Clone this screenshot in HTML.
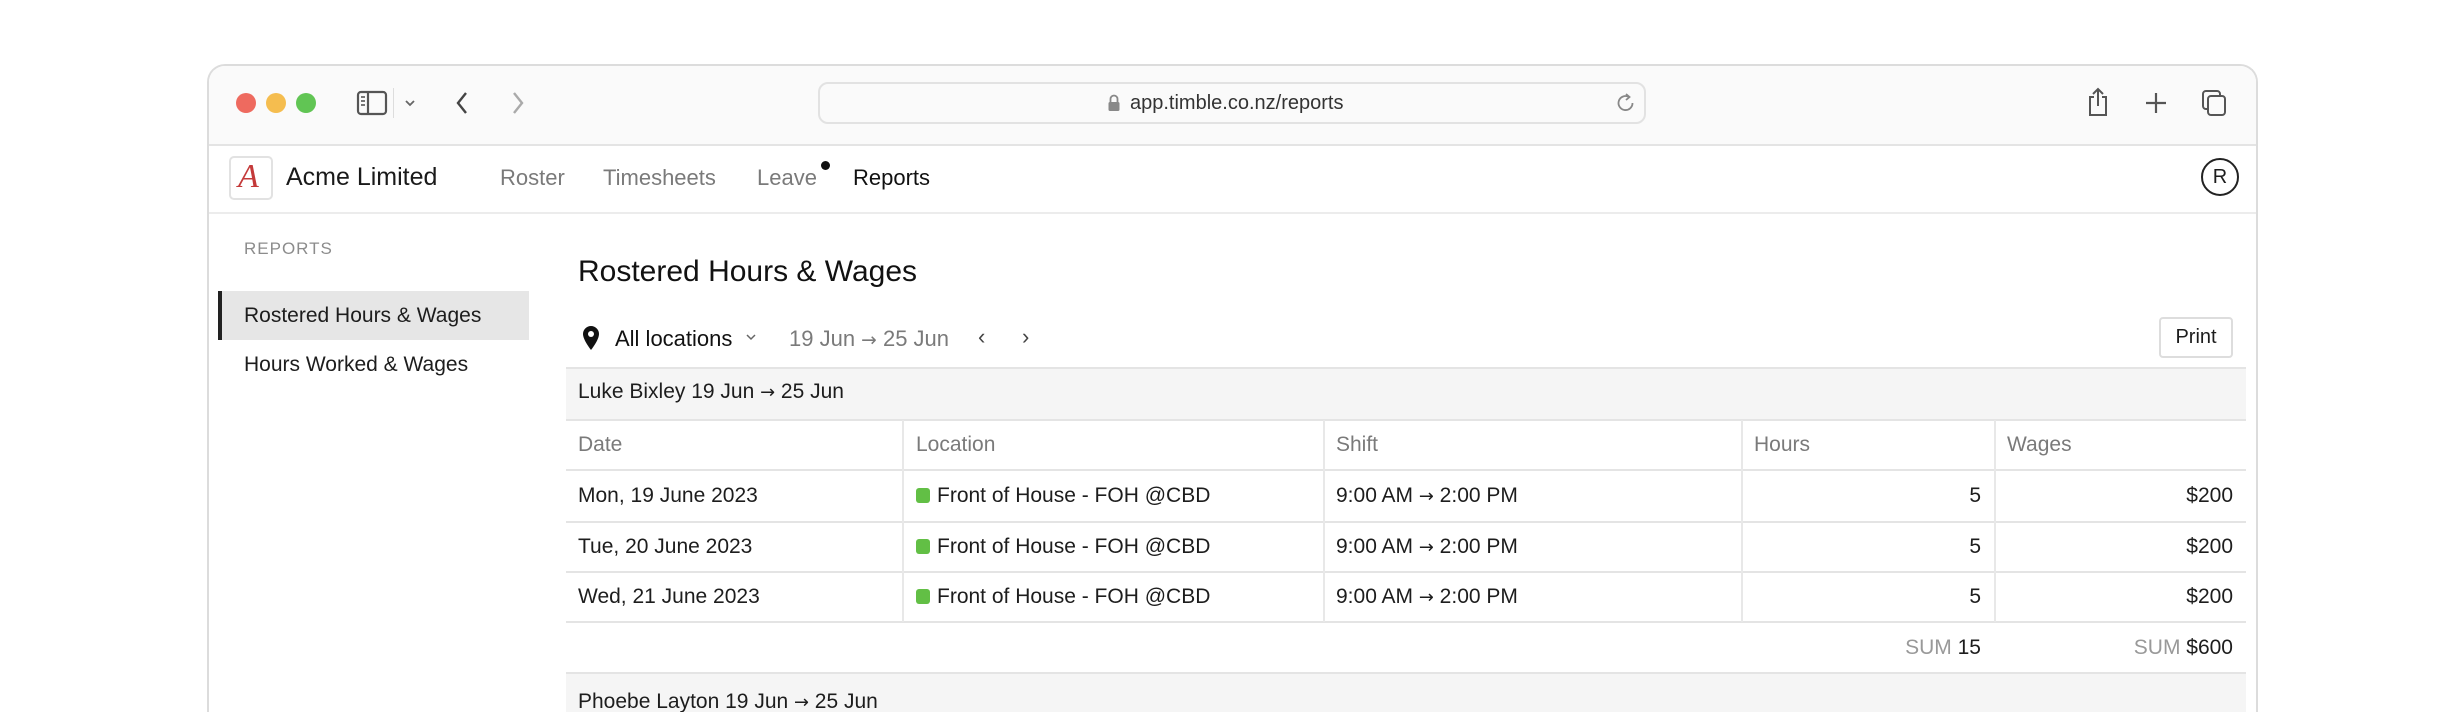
<!DOCTYPE html>
<html style="width:2464px;height:712px;overflow:hidden"><head><meta charset="utf-8"><style>
*{box-sizing:border-box;margin:0;padding:0}
body{width:2464px;height:712px;background:#fff;font-family:"Liberation Sans",Arial,sans-serif;position:relative;overflow:hidden;color:#1d1d1d}
#clip{position:absolute;left:0;top:0;width:2464px;height:712px;overflow:hidden}
.a{position:absolute;white-space:nowrap}
.win{position:absolute;left:207px;top:64px;width:2051px;height:648px;border:2px solid #dcdcdc;border-bottom:none;border-radius:18px 18px 0 0;background:#fff;overflow:hidden}
.tb{position:absolute;left:0;top:0;width:100%;height:80px;background:#fafafa;border-bottom:2px solid #e4e4e4}
.nav{position:absolute;left:0;top:82px;width:100%;height:66px;border-bottom:2px solid #ececec}
.vl{position:absolute;top:470px;height:152px;width:2px;background:#e8e8e8}
.hl{position:absolute;left:566px;width:1680px;height:2px;background:#e4e4e4}
.t{font-size:21px;color:#1d1d1d}
.g{color:#7a7a7a}
.ar{font-family:"DejaVu Sans",sans-serif;font-size:0.85em}
.sq{display:inline-block;width:14px;height:15px;background:#62bf45;border-radius:3px;margin-right:7px;vertical-align:-1px}
</style></head><body><div id="clip">
<div class="win">
 <div class="tb"></div>
 <div class="nav"></div>
</div>
<div class="a" style="left:236px;top:93px;width:20px;height:20px;border-radius:50%;background:#ee6a5f"></div>
<div class="a" style="left:266px;top:93px;width:20px;height:20px;border-radius:50%;background:#f5bd4f"></div>
<div class="a" style="left:296px;top:93px;width:20px;height:20px;border-radius:50%;background:#61c554"></div>
<svg class="a" style="left:356px;top:90px" width="32" height="26" viewBox="0 0 32 26"><rect x="2" y="2" width="28" height="22" rx="3" fill="none" stroke="#555" stroke-width="2.2"/><line x1="12" y1="2" x2="12" y2="24" stroke="#555" stroke-width="2.2"/><line x1="5" y1="7" x2="9" y2="7" stroke="#555" stroke-width="1.6"/><line x1="5" y1="11" x2="9" y2="11" stroke="#555" stroke-width="1.6"/><line x1="5" y1="15" x2="9" y2="15" stroke="#555" stroke-width="1.6"/></svg>
<div class="a" style="left:393px;top:88px;width:1px;height:30px;background:#ddd"></div>
<svg class="a" style="left:404px;top:98px" width="12" height="10" viewBox="0 0 12 10"><path d="M2 3 L6 7 L10 3" fill="none" stroke="#666" stroke-width="1.8"/></svg>
<svg class="a" style="left:454px;top:90px" width="16" height="26" viewBox="0 0 16 26"><path d="M12 3 L4 13 L12 23" fill="none" stroke="#444" stroke-width="2.4"/></svg>
<svg class="a" style="left:510px;top:90px" width="16" height="26" viewBox="0 0 16 26"><path d="M4 3 L12 13 L4 23" fill="none" stroke="#aaa" stroke-width="2.4"/></svg>
<div class="a" style="left:818px;top:82px;width:828px;height:42px;border:2px solid #e2e2e2;border-radius:10px;background:#fafafa"></div>
<svg class="a" style="left:1107px;top:93px" width="14" height="20" viewBox="0 0 14 20"><path d="M3.5 9 V6 a3.5 3.5 0 0 1 7 0 V9" fill="none" stroke="#888" stroke-width="1.8"/><rect x="1.5" y="9" width="11" height="9" rx="1.5" fill="#888"/></svg>
<div class="a" style="left:1130px;top:92px;font-size:20px;color:#333">app.timble.co.nz/reports</div>
<svg class="a" style="left:1616px;top:92px" width="20" height="22" viewBox="0 0 20 22"><path d="M13 5 A7 7 0 1 0 16.5 11" fill="none" stroke="#888" stroke-width="1.8"/><path d="M10 2 L13.5 5 L10 8" fill="none" stroke="#888" stroke-width="1.8"/></svg>
<svg class="a" style="left:2085px;top:86px" width="26" height="32" viewBox="0 0 26 32"><path d="M9 11 H5 V29 H21 V11 H17" fill="none" stroke="#555" stroke-width="2"/><path d="M13 20 V3 M8 8 L13 3 L18 8" fill="none" stroke="#555" stroke-width="2"/></svg>
<svg class="a" style="left:2144px;top:91px" width="24" height="24" viewBox="0 0 24 24"><path d="M12 2 V22 M2 12 H22" stroke="#555" stroke-width="2.2"/></svg>
<svg class="a" style="left:2200px;top:88px" width="28" height="30" viewBox="0 0 28 30"><rect x="3" y="3" width="17" height="18" rx="3" fill="none" stroke="#555" stroke-width="2"/><rect x="8" y="8" width="17" height="19" rx="3" fill="#fafafa" stroke="#555" stroke-width="2"/></svg>
<div class="a" style="left:229px;top:156px;width:44px;height:44px;border:2px solid #e2e2e2;border-radius:5px;background:#fff"></div>
<div class="a" style="left:238px;top:158px;font-family:'Liberation Serif',serif;font-style:italic;font-size:34px;color:#c43a3a">A</div>
<div class="a" style="left:286px;top:163px;font-size:25px;color:#1a1a1a">Acme Limited</div>
<div class="a g" style="left:500px;top:165px;font-size:22px">Roster</div>
<div class="a g" style="left:603px;top:165px;font-size:22px">Timesheets</div>
<div class="a g" style="left:757px;top:165px;font-size:22px">Leave</div>
<div class="a" style="left:821px;top:161px;width:9px;height:9px;border-radius:50%;background:#111"></div>
<div class="a" style="left:853px;top:165px;font-size:22px;color:#111">Reports</div>
<div class="a" style="left:2201px;top:158px;width:38px;height:38px;border:2px solid #222;border-radius:50%;text-align:center;line-height:34px;font-size:20px">R</div>
<div class="a" style="left:244px;top:239px;font-size:17px;color:#8c8c8c;letter-spacing:1px">REPORTS</div>
<div class="a" style="left:218px;top:291px;width:311px;height:49px;background:#e6e6e6;border-left:4px solid #222"></div>
<div class="a t" style="left:244px;top:304px;font-size:21px">Rostered Hours &amp; Wages</div>
<div class="a t" style="left:244px;top:353px;font-size:21px">Hours Worked &amp; Wages</div>
<div class="a" style="left:578px;top:255px;font-size:30px;color:#111">Rostered Hours &amp; Wages</div>
<svg class="a" style="left:582px;top:325px" width="18" height="26" viewBox="0 0 18 26"><path d="M9 1 A8 8 0 0 0 1 9 C1 15 9 25 9 25 C9 25 17 15 17 9 A8 8 0 0 0 9 1 Z" fill="#111"/><circle cx="9" cy="9" r="3" fill="#fff"/></svg>
<div class="a" style="left:615px;top:326px;font-size:22px;color:#111">All locations</div>
<svg class="a" style="left:745px;top:332px" width="12" height="10" viewBox="0 0 12 10"><path d="M2 3 L6 7 L10 3" fill="none" stroke="#666" stroke-width="1.5"/></svg>
<div class="a g" style="left:789px;top:326px;font-size:22px">19 Jun <span class="ar">→</span> 25 Jun</div>
<div class="a" style="left:978px;top:324px;font-size:22px;color:#444">‹</div>
<div class="a" style="left:1022px;top:324px;font-size:22px;color:#444">›</div>
<div class="a" style="left:2159px;top:317px;width:74px;height:41px;border:2px solid #ddd;border-radius:4px;text-align:center;line-height:37px;font-size:20px">Print</div>
<div class="a" style="left:566px;top:368px;width:1680px;height:52px;background:#f5f5f5"></div>
<div class="hl" style="top:367px"></div>
<div class="hl" style="top:419px"></div>
<div class="hl" style="top:469px"></div>
<div class="hl" style="top:521px"></div>
<div class="hl" style="top:571px"></div>
<div class="hl" style="top:621px"></div>
<div class="a" style="left:566px;top:673px;width:1680px;height:39px;background:#f5f5f5"></div>
<div class="hl" style="top:672px"></div>
<div class="vl" style="left:902px;top:420px;height:202px"></div>
<div class="vl" style="left:1323px;top:420px;height:202px"></div>
<div class="vl" style="left:1741px;top:420px;height:202px"></div>
<div class="vl" style="left:1994px;top:420px;height:202px"></div>
<div class="a t" style="left:578px;top:380px">Luke Bixley 19 Jun <span class="ar">→</span> 25 Jun</div>
<div class="a t g" style="left:578px;top:433px">Date</div>
<div class="a t g" style="left:916px;top:433px">Location</div>
<div class="a t g" style="left:1336px;top:433px">Shift</div>
<div class="a t g" style="left:1754px;top:433px">Hours</div>
<div class="a t g" style="left:2007px;top:433px">Wages</div>
<div class="a t" style="left:578px;top:484px">Mon, 19 June 2023</div>
<div class="a t" style="left:916px;top:484px"><span class="sq"></span>Front of House - FOH @CBD</div>
<div class="a t" style="left:1336px;top:484px">9:00 AM <span class="ar">→</span> 2:00 PM</div>
<div class="a t" style="right:483px;top:484px">5</div>
<div class="a t" style="right:231px;top:484px">$200</div>
<div class="a t" style="left:578px;top:535px">Tue, 20 June 2023</div>
<div class="a t" style="left:916px;top:535px"><span class="sq"></span>Front of House - FOH @CBD</div>
<div class="a t" style="left:1336px;top:535px">9:00 AM <span class="ar">→</span> 2:00 PM</div>
<div class="a t" style="right:483px;top:535px">5</div>
<div class="a t" style="right:231px;top:535px">$200</div>
<div class="a t" style="left:578px;top:585px">Wed, 21 June 2023</div>
<div class="a t" style="left:916px;top:585px"><span class="sq"></span>Front of House - FOH @CBD</div>
<div class="a t" style="left:1336px;top:585px">9:00 AM <span class="ar">→</span> 2:00 PM</div>
<div class="a t" style="right:483px;top:585px">5</div>
<div class="a t" style="right:231px;top:585px">$200</div>
<div class="a t" style="right:483px;top:636px"><span style="color:#999">SUM</span> 15</div>
<div class="a t" style="right:231px;top:636px"><span style="color:#999">SUM</span> $600</div>
<div class="a t" style="left:578px;top:690px;height:22px;overflow:hidden;line-height:24px">Phoebe Layton 19 Jun <span class="ar">→</span> 25 Jun</div>
</div></body></html>
